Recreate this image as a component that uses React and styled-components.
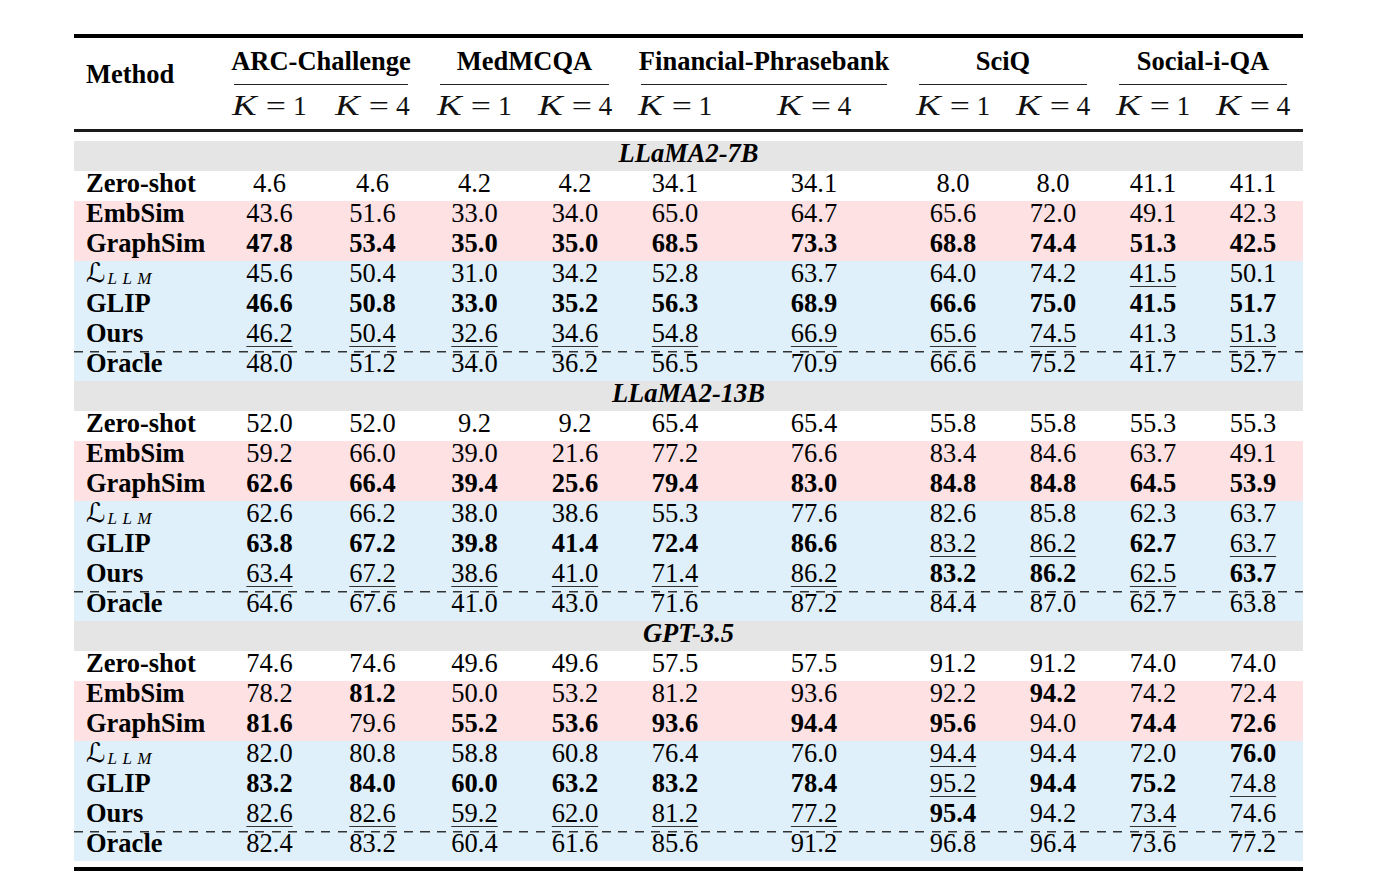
import styled, { createGlobalStyle } from "styled-components";

const GlobalStyle = createGlobalStyle`
  html, body {
    margin: 0;
    padding: 0;
    background: #fff;
  }
  body {
    font-family: "Liberation Serif", "Times New Roman", serif;
    color: #000;
  }
`;

const COLS = "144px 103px 103px 101px 100px 100px 178px 100px 100px 100px 100px";

const TONES = {
  white: "#ffffff",
  pink: "#fde1e3",
  blue: "#dff0fa",
};

const Page = styled.div`
  padding: 34px 0 0 74px;
`;

const Table = styled.div`
  width: 1229px;
  border-top: 4px solid #000;
  border-bottom: 4px solid #000;
  font-size: 26.5px;
`;

const Head = styled.div`
  display: grid;
  grid-template-columns: ${COLS};
  border-bottom: 3px solid #1a1a1a;
`;

const MethodHead = styled.div`
  grid-row: 1 / span 2;
  padding: 21px 0 0 12px;
  line-height: 30px;
  font-weight: 700;
`;

const GroupHead = styled.div`
  grid-column: span 2;
  margin: 0 16px;
  padding: 8px 0 7.5px;
  line-height: 30px;
  display: flex;
  justify-content: center;
  font-weight: 700;
  white-space: nowrap;
  border-bottom: 1.5px solid #222;
`;

const SubHead = styled.div`
  padding: 6px 0 8px;
  line-height: 30px;
  display: flex;
  justify-content: center;
  align-items: baseline;
  font-size: 27.5px;
  color: #111;
`;

const Var = styled.i`
  display: inline-block;
  font-size: 28.5px;
  transform: scaleX(1.3);
  transform-origin: left center;
  margin-right: 17px;
`;

const Eq = styled.span`
  display: inline-block;
  transform: scaleX(1.3);
  margin-right: 9px;
`;

const Body = styled.div`
  margin: 9px 0 6px;
`;

const Band = styled.div`
  height: 30px;
  line-height: 24px;
  background: #e5e5e5;
  text-align: center;
  font-weight: 700;
  font-style: italic;
`;

const Row = styled.div`
  display: grid;
  grid-template-columns: ${COLS};
  height: 30px;
  line-height: 24px;
  background-color: ${(p) => TONES[p.$tone]};
  ${(p) =>
    p.$dashed &&
    `
    background-image: repeating-linear-gradient(to right, #333 0 9px, transparent 9px 16.5px);
    background-size: 100% 1.5px;
    background-repeat: no-repeat;
    background-position: 0 0.5px;
  `}
`;

const Name = styled.div`
  padding-left: 12px;
  font-weight: 700;
  white-space: nowrap;
`;

const Loss = styled.div`
  padding-left: 12px;
  white-space: nowrap;
`;

const Script = styled.span`
  font-family: "DejaVu Serif", "DejaVu Sans", serif;
  font-size: 27px;
  font-weight: 400;
`;

const Sub = styled.span`
  font-style: italic;
  font-size: 17px;
  letter-spacing: 5.5px;
  margin-left: 2px;
  position: relative;
  top: 2px;
`;

const Cell = styled.div`
  text-align: center;
`;

const Num = styled.span`
  font-weight: ${(p) => (p.$bold ? 700 : 400)};
  text-decoration: ${(p) => (p.$under ? "underline" : "none")};
  text-underline-offset: 4px;
  text-decoration-thickness: 1.3px;
  text-decoration-color: #333;
`;

const groups = ["ARC-Challenge", "MedMCQA", "Financial-Phrasebank", "SciQ", "Social-i-QA"];

// b: bold, u: underlined
const sections = [
  {
    model: "LLaMA2-7B",
    rows: [
      ["Zero-shot", "4.6 4.6 4.2 4.2 34.1 34.1 8.0 8.0 41.1 41.1"],
      ["EmbSim", "43.6 51.6 33.0 34.0 65.0 64.7 65.6 72.0 49.1 42.3"],
      ["GraphSim", "b47.8 b53.4 b35.0 b35.0 b68.5 b73.3 b68.8 b74.4 b51.3 b42.5"],
      ["LLM", "45.6 50.4 31.0 34.2 52.8 63.7 64.0 74.2 u41.5 50.1"],
      ["GLIP", "b46.6 b50.8 b33.0 b35.2 b56.3 b68.9 b66.6 b75.0 b41.5 b51.7"],
      ["Ours", "u46.2 u50.4 u32.6 u34.6 u54.8 u66.9 u65.6 u74.5 41.3 u51.3"],
      ["Oracle", "48.0 51.2 34.0 36.2 56.5 70.9 66.6 75.2 41.7 52.7"],
    ],
  },
  {
    model: "LLaMA2-13B",
    rows: [
      ["Zero-shot", "52.0 52.0 9.2 9.2 65.4 65.4 55.8 55.8 55.3 55.3"],
      ["EmbSim", "59.2 66.0 39.0 21.6 77.2 76.6 83.4 84.6 63.7 49.1"],
      ["GraphSim", "b62.6 b66.4 b39.4 b25.6 b79.4 b83.0 b84.8 b84.8 b64.5 b53.9"],
      ["LLM", "62.6 66.2 38.0 38.6 55.3 77.6 82.6 85.8 62.3 63.7"],
      ["GLIP", "b63.8 b67.2 b39.8 b41.4 b72.4 b86.6 u83.2 u86.2 b62.7 u63.7"],
      ["Ours", "u63.4 u67.2 u38.6 u41.0 u71.4 u86.2 b83.2 b86.2 u62.5 b63.7"],
      ["Oracle", "64.6 67.6 41.0 43.0 71.6 87.2 84.4 87.0 62.7 63.8"],
    ],
  },
  {
    model: "GPT-3.5",
    rows: [
      ["Zero-shot", "74.6 74.6 49.6 49.6 57.5 57.5 91.2 91.2 74.0 74.0"],
      ["EmbSim", "78.2 b81.2 50.0 53.2 81.2 93.6 92.2 b94.2 74.2 72.4"],
      ["GraphSim", "b81.6 79.6 b55.2 b53.6 b93.6 b94.4 b95.6 94.0 b74.4 b72.6"],
      ["LLM", "82.0 80.8 58.8 60.8 76.4 76.0 u94.4 94.4 72.0 b76.0"],
      ["GLIP", "b83.2 b84.0 b60.0 b63.2 b83.2 b78.4 u95.2 b94.4 b75.2 u74.8"],
      ["Ours", "u82.6 u82.6 u59.2 u62.0 u81.2 u77.2 b95.4 94.2 u73.4 74.6"],
      ["Oracle", "82.4 83.2 60.4 61.6 85.6 91.2 96.8 96.4 73.6 77.2"],
    ],
  },
];

const toneFor = (name) => {
  if (name === "Zero-shot") return "white";
  if (name === "EmbSim" || name === "GraphSim") return "pink";
  return "blue";
};

const KLabel = ({ k }) => (
  <SubHead>
    <Var>K</Var>
    <Eq>=</Eq>
    <span>{k}</span>
  </SubHead>
);

const DataRow = ({ name, values }) => (
  <Row $tone={toneFor(name)} $dashed={name === "Oracle"}>
    {name === "LLM" ? (
      <Loss>
        <Script>ℒ</Script>
        <Sub>LLM</Sub>
      </Loss>
    ) : (
      <Name>{name}</Name>
    )}
    {values.split(" ").map((v, i) => {
      const bold = v[0] === "b";
      const under = v[0] === "u";
      const text = bold || under ? v.slice(1) : v;
      return (
        <Cell key={i}>
          <Num $bold={bold} $under={under}>
            {text}
          </Num>
        </Cell>
      );
    })}
  </Row>
);

const App = () => {
  return (
    <Page>
      <GlobalStyle />
      <Table>
        <Head>
          <MethodHead>Method</MethodHead>
          {groups.map((g) => (
            <GroupHead key={g}>{g}</GroupHead>
          ))}
          {groups.map((g) => [
            <KLabel key={g + "1"} k="1" />,
            <KLabel key={g + "4"} k="4" />,
          ])}
        </Head>
        <Body>
          {sections.map((s) => (
            <div key={s.model}>
              <Band>{s.model}</Band>
              {s.rows.map(([name, values]) => (
                <DataRow key={name} name={name} values={values} />
              ))}
            </div>
          ))}
        </Body>
      </Table>
    </Page>
  );
};

export default App;
